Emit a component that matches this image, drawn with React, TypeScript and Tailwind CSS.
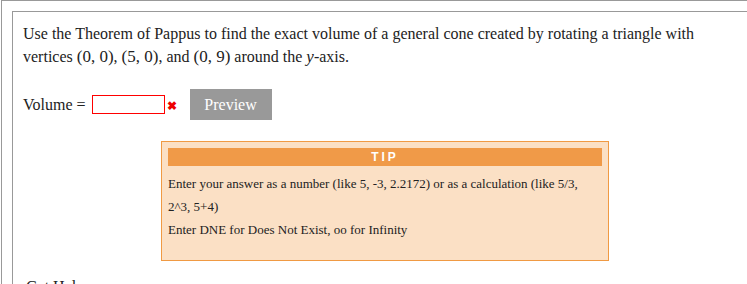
export default function App() {
  return (
    <div className="h-[284px] w-[747px] overflow-hidden bg-white font-['Liberation_Serif',serif] text-[#222]">
      <div className="ml-[1px] w-[800px] border-l border-t border-[#999] pl-[10px] pt-[10px]">
        <div className="border-l border-t border-[#999] pl-[10px] pt-[10px]">
          <p className="text-[16px] leading-[23px]">
            Use the Theorem of Pappus to find the exact volume of a general cone created by rotating a triangle with
            <br />
            vertices <span className="text-[17px]">(0, 0)</span>, <span className="text-[17px]">(5, 0)</span>, and{" "}
            <span className="text-[17px]">(0, 9)</span> around the <span className="text-[17px] italic">y</span>-axis.
          </p>

          <div className="mt-[21px] flex h-[31px] items-center text-[16px]">
            <span>Volume =</span>
            <input type="text" className="ml-[6px] h-[19px] w-[73px] border border-[#f00] bg-white outline-none" />
            <span className="ml-[2px] mt-[2px] text-[12px] font-bold leading-none text-[#e00]">✖</span>
            <button className="ml-[13px] h-[31px] w-[82px] bg-[#999] text-[16px] text-white">Preview</button>
          </div>

          <div className="ml-[138px] mt-[21px] h-[120px] w-[448px] border border-[#f09a43] bg-[#fbe0c5] px-[6px] pt-[6px]">
            <div className="flex h-[18px] items-center justify-center bg-[#f09a48] font-['Liberation_Sans',sans-serif] text-[12px] font-bold tracking-[3px] text-white">
              TIP
            </div>
            <div className="mt-[6px] text-[13px] leading-[23px]">
              <p>
                Enter your answer as a number (like 5, -3, 2.2172) or as a calculation (like 5/3,
                <br />
                2^3, 5+4)
              </p>
              <p>Enter DNE for Does Not Exist, oo for Infinity</p>
            </div>
          </div>

          <p className="ml-[3px] mt-[14px] text-[16px] leading-[23px]">Get Help:</p>
        </div>
      </div>
    </div>
  );
}
